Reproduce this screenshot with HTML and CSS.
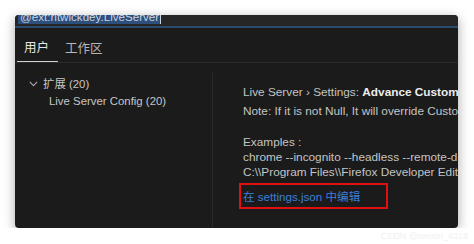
FILE: index.html
```html
<!DOCTYPE html>
<html>
<head>
<meta charset="utf-8">
<link rel="stylesheet" href="styles.css">
</head>
<body>
<div class="window">
  <div class="search">
    <span class="query">@ext:ritwickdey.LiveServer</span><span class="caret"></span>
  </div>
  <div class="tabs">
    <div class="tab active">用户</div>
    <div class="tab">工作区</div>
  </div>
  <div class="main">
    <div class="tree">
      <div class="node"><svg class="chev" width="9" height="6" viewBox="0 0 9 6"><path d="M0.8 0.8 L4.5 4.6 L8.2 0.8" fill="none" stroke="#a8a8a8" stroke-width="1.1"/></svg><span>扩展 (20)</span></div>
      <div class="node child">Live Server Config (20)</div>
    </div>
    <div class="divider"></div>
    <div class="detail">
      <div class="title">Live Server › Settings: <b>Advance Custom Browser Command Line</b></div>
      <div class="line">Note: If it is not Null, It will override Custom Browser settings.</div>
      <div class="gap"></div>
      <div class="line">Examples :</div>
      <div class="line">chrome --incognito --headless --remote-debugging-port=9222</div>
      <div class="line">C:\\Program Files\\Firefox Developer Edition\\firefox.exe --private-window</div>
      <div class="link-box"><span class="link">在 settings.json 中编辑</span></div>
    </div>
  </div>
</div>
<div class="watermark">CSDN @weixin_4318</div>
</body>
</html>
```
FILE: styles.css
```css
html, body {
  margin: 0;
  padding: 0;
  background: #ffffff;
  font-family: "Liberation Sans", Arial, "Noto Sans CJK SC", sans-serif;
  overflow: hidden;
}
.window {
  margin: 15px 0 0 15px;
  width: 443px;
  height: 213px;
  background: #1b1b1b;
  border-radius: 4px;
  box-shadow: 0 3px 12px rgba(0, 0, 0, 0.35);
  overflow: hidden;
  display: flex;
  flex-direction: column;
}
.search {
  height: 11px;
  background: #262626;
  border-bottom: 2px solid #2a4a70;
  padding-left: 3px;
  display: flex;
  align-items: flex-end;
  overflow: hidden;
  flex-shrink: 0;
}
.query {
  display: block;
  background: #2c4f7c;
  color: #c8d2e0;
  font-size: 11.6px;
  line-height: 14px;
  height: 14px;
  padding: 0 1px 0 2px;
  margin-bottom: 2px;
  white-space: nowrap;
}
.caret {
  display: block;
  width: 1px;
  height: 10px;
  margin-bottom: 2px;
  background: #c8d2e0;
}
.tabs {
  height: 35px;
  display: flex;
  border-bottom: 1px solid #2c2c2c;
  box-sizing: border-box;
  padding-left: 2px;
  flex-shrink: 0;
}
.tab {
  font-family: "Noto Sans CJK SC", sans-serif;
  font-size: 12.5px;
  color: #b8b8b8;
  padding: 0 7px;
  display: flex;
  align-items: center;
  height: 34px;
  box-sizing: border-box;
  padding-top: 4px;
}
.tab.active {
  color: #e6e6e6;
  border-bottom: 1px solid #d0d0d0;
  padding-left: 7px;
  padding-right: 9px;
}
.main {
  flex: 1;
  display: flex;
}
.tree {
  width: 197px;
  padding-top: 11px;
  flex-shrink: 0;
}
.node {
  height: 18px;
  display: flex;
  align-items: center;
  font-size: 11.4px;
  color: #c6c6c6;
  padding-left: 14px;
}
.node span {
  font-family: "Liberation Sans", "Noto Sans CJK SC", sans-serif;
}
.chev {
  margin-right: 5px;
  margin-top: 1px;
}
.node.child {
  padding-left: 34px;
}
.divider {
  width: 1px;
  background: #2a2a2a;
  margin-top: 10px;
  flex-shrink: 0;
}
.detail {
  padding-left: 30px;
  padding-top: 22px;
  white-space: nowrap;
  overflow: hidden;
  flex: 1;
}
.title {
  font-size: 11.8px;
  line-height: 15px;
  color: #c4c4c4;
  margin-bottom: 4px;
}
.title b {
  color: #ececec;
}
.line {
  font-size: 11.8px;
  line-height: 15px;
  color: #c4c4c4;
}
.gap {
  height: 16px;
}
.link-box {
  display: inline-block;
  border: 2px solid #e01010;
  margin-left: -4px;
  margin-top: 3px;
  width: 149px;
  height: 26px;
  box-sizing: border-box;
  padding-left: 2px;
  line-height: 21px;
}
.link {
  color: #3b7fd8;
  font-size: 11.6px;
  font-family: "Liberation Sans", "Noto Sans CJK SC", sans-serif;
}
.watermark {
  position: absolute;
  right: 6px;
  top: 231px;
  font-size: 9px;
  color: #f0f0f0;
}
```
